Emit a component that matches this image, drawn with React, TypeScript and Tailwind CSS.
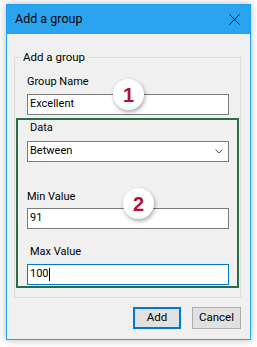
import React from "react";

const font = { fontFamily: 'Roboto, "Noto Sans", "Liberation Sans", sans-serif' };

function Badge({ n, className }: { n: string; className: string }) {
  return (
    <div
      className={`absolute w-[31px] h-[31px] rounded-full bg-white shadow-[1px_2px_4px_rgba(0,0,0,0.35)] flex items-center justify-center text-[20px] font-bold text-[#b3122e] ${className}`}
      style={{ fontFamily: '"Liberation Sans", Arial, sans-serif' }}
    >
      {n}
    </div>
  );
}

function TextBox({ value, focused, caret }: { value: string; focused?: boolean; caret?: boolean }) {
  return (
    <div
      className={`ml-[9px] w-[202px] h-[21px] bg-white border flex items-center pl-[2px] text-[11px] text-black ${
        focused ? "border-[#0078d7]" : "border-[#7a7a7a]"
      }`}
    >
      <span>{value}</span>
      {caret && <span className="w-px h-[13px] bg-black" />}
    </div>
  );
}

export default function App() {
  return (
    <div className="relative w-[257px] h-[347px] bg-white pt-[4px] pl-[6px]" style={font}>
      <div className="w-[245px] h-[336px] border border-[#1ba1f2] bg-[#f0f0f0] shadow-[0_0_8px_rgba(0,0,0,0.28)] flex flex-col">
        {/* Title bar */}
        <div className="h-[29px] bg-[#2ba4f0] flex items-center justify-between pl-[8px] pr-[10px]">
          <span className="text-[12.5px] text-black">Add a group</span>
          <svg width="11" height="11" viewBox="0 0 11 11">
            <path d="M0.5 0.5 L10.5 10.5 M10.5 0.5 L0.5 10.5" stroke="#000" strokeWidth="1" />
          </svg>
        </div>

        {/* Group box */}
        <div className="relative mt-[23px] ml-[7px] w-[227px] border border-[#dcdcdc] px-px pb-[9px]">
          <span className="absolute -top-[9px] left-[6px] px-[2px] bg-[#f0f0f0] text-[11.5px] leading-[16px] text-black">
            Add a group
          </span>
          <div className="pt-[16px] pl-[11px] text-[11px] leading-[16px] text-black">Group Name</div>
          <div className="mt-[4px] ml-[2px]">
            <TextBox value="Excellent" />
          </div>

          {/* Highlighted area */}
          <div className="mt-[3px] border-2 border-[#2b6b45] pb-px">
            <div className="pl-[12px] text-[11px] leading-[16px] text-black">Data</div>
            <div className="mt-[5px] ml-[9px] w-[202px] h-[21px] bg-white border border-[#7a7a7a] flex items-center justify-between pl-[2px] pr-[5px] text-[11px] text-black">
              <span>Between</span>
              <svg width="8" height="5" viewBox="0 0 8 5">
                <path d="M0.5 0.5 L4 4 L7.5 0.5" fill="none" stroke="#555" strokeWidth="1" />
              </svg>
            </div>
            <div className="mt-[27px] pl-[9px] text-[11px] leading-[16px] text-black">Min Value</div>
            <div className="mt-[3px]">
              <TextBox value="91" />
            </div>
            <div className="mt-[15px] pl-[12px] text-[11px] leading-[16px] text-black">Max Value</div>
            <div className="mt-[4px]">
              <TextBox value="100" focused caret />
            </div>
          </div>
        </div>

        {/* Buttons */}
        <div className="mt-[9px] flex justify-end gap-[11px] pr-[9px]">
          <button className="w-[48px] h-[22px] bg-[#e1e1e1] border-2 border-[#0078d7] text-[11.5px] text-black">
            Add
          </button>
          <button className="w-[49px] h-[22px] bg-[#e1e1e1] border border-[#adadad] text-[11.5px] text-black">
            Cancel
          </button>
        </div>
      </div>

      <Badge n="1" className="left-[113px] top-[79px]" />
      <Badge n="2" className="left-[123px] top-[188px]" />
    </div>
  );
}
